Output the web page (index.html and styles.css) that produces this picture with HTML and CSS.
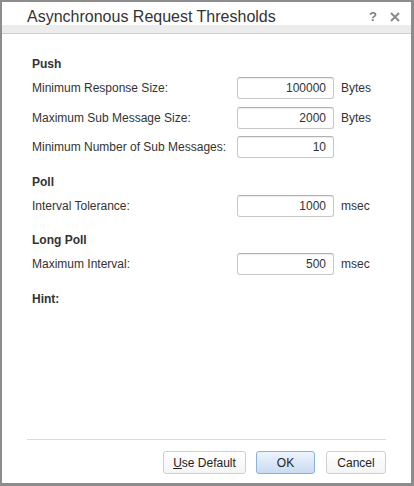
FILE: index.html
```html
<!DOCTYPE html>
<html lang="en">
<head>
<meta charset="utf-8">
<title>Asynchronous Request Thresholds</title>
<link rel="stylesheet" href="styles.css">
</head>
<body>
<div class="dialog">
  <div class="titlebar">
    <span class="title">Asynchronous Request Thresholds</span>
    <span class="tools">
      <span class="help">?</span>
      <svg class="close" width="10" height="10" viewBox="0 0 10 10" aria-hidden="true">
        <path d="M1 1 L9 9 M9 1 L1 9" stroke="#8a8a8a" stroke-width="2" fill="none"/>
      </svg>
    </span>
  </div>
  <div class="strip"></div>
  <div class="content">
    <div class="section">
      <div class="heading">Push</div>
      <div class="row">
        <label class="label">Minimum Response Size:</label>
        <input class="field" type="text" value="100000">
        <span class="unit">Bytes</span>
      </div>
      <div class="row">
        <label class="label">Maximum Sub Message Size:</label>
        <input class="field" type="text" value="2000">
        <span class="unit">Bytes</span>
      </div>
      <div class="row">
        <label class="label">Minimum Number of Sub Messages:</label>
        <input class="field" type="text" value="10">
        <span class="unit"></span>
      </div>
    </div>
    <div class="section">
      <div class="heading">Poll</div>
      <div class="row">
        <label class="label">Interval Tolerance:</label>
        <input class="field" type="text" value="1000">
        <span class="unit">msec</span>
      </div>
    </div>
    <div class="section">
      <div class="heading">Long Poll</div>
      <div class="row">
        <label class="label">Maximum Interval:</label>
        <input class="field" type="text" value="500">
        <span class="unit">msec</span>
      </div>
    </div>
    <div class="section">
      <div class="heading">Hint:</div>
    </div>
  </div>
  <div class="footer">
    <button class="btn btn-default" type="button"><span class="ul">U</span>se Default</button>
    <button class="btn btn-ok" type="button">OK</button>
    <button class="btn btn-cancel" type="button">Cancel</button>
  </div>
</div>
</body>
</html>
```

FILE: styles.css
```css
html, body {
  margin: 0;
  padding: 0;
  background: #ffffff;
}

body {
  font-family: "Liberation Sans", Arial, sans-serif;
  color: #333333;
}

.dialog {
  box-sizing: border-box;
  width: 414px;
  height: 486px;
  border-style: solid;
  border-color: #8c8c8c;
  border-width: 2px 3px 3px 2px;
  background: #ffffff;
  display: flex;
  flex-direction: column;
}

.titlebar {
  height: 23px;
  box-sizing: border-box;
  padding: 7px 0 0 25px;
  display: flex;
  justify-content: space-between;
  align-items: flex-start;
}

.title {
  font-size: 16px;
  line-height: 16px;
  color: #333333;
}

.tools {
  display: flex;
  align-items: center;
  gap: 13px;
  padding-right: 11px;
  margin-top: 2px;
}

.help {
  font-size: 13px;
  font-weight: bold;
  line-height: 12px;
  color: #808080;
}

.close {
  display: block;
}

.strip {
  height: 8px;
  background: #ececec;
  border-bottom: 1px solid #cdcdcd;
}

.content {
  flex: 1;
  padding: 23px 25px 0 30px;
}

.section + .section {
  margin-top: 16.5px;
}

.heading {
  font-size: 12px;
  font-weight: bold;
  line-height: 14px;
  color: #333333;
  margin-bottom: 6px;
}

.row {
  display: grid;
  grid-template-columns: 198px 97px auto;
  column-gap: 7px;
  align-items: center;
  height: 22px;
}

.row + .row {
  margin-top: 7.5px;
}

.label,
.unit {
  font-size: 12px;
  line-height: 14px;
  color: #333333;
  white-space: nowrap;
}

.field {
  box-sizing: border-box;
  width: 97px;
  height: 22px;
  margin: 0;
  padding: 0 7px 0 4px;
  border: 1px solid #c8c8c8;
  border-top-color: #b0b0b0;
  border-radius: 3px;
  box-shadow: inset 0 1px 1px rgba(0, 0, 0, 0.08);
  background: #ffffff;
  font-family: "Liberation Sans", Arial, sans-serif;
  font-size: 12px;
  color: #333333;
  text-align: right;
  outline: none;
}

.footer {
  margin: 0 25px;
  border-top: 1px solid #dcdcdc;
  padding: 11px 0 9px;
  display: flex;
  justify-content: flex-end;
  gap: 10px;
}

.btn {
  box-sizing: border-box;
  height: 23px;
  margin: 0;
  padding: 0;
  border: 1px solid #cfcfcf;
  border-radius: 3px;
  background: linear-gradient(#ffffff, #f4f4f4);
  font-family: "Liberation Sans", Arial, sans-serif;
  font-size: 12px;
  color: #222222;
  text-align: center;
}

.btn-default {
  width: 83px;
}

.btn-ok {
  width: 59px;
  border-color: #8cb0dc;
  background: linear-gradient(#eef4fc, #c9dbf3);
}

.btn-cancel {
  width: 60px;
  margin-left: 1px;
}

.ul {
  text-decoration: underline;
}
```
